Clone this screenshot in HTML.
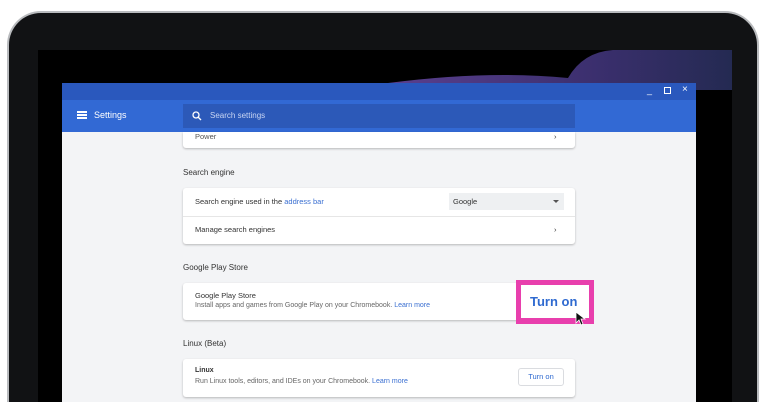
<!DOCTYPE html>
<html style="width:768px;height:402px;overflow:hidden"><head><style>
*{margin:0;padding:0;box-sizing:border-box}
body{width:768px;height:402px;overflow:hidden;background:#fff;font-family:"Liberation Sans",sans-serif;position:relative}
.bezel{position:absolute;left:7px;top:11px;width:752px;height:391px;border-radius:34px 34px 0 0;background:#111214;border:2px solid #b9bbbe;border-bottom:none}
.screen{position:absolute;left:38px;top:50px;width:694px;height:352px;background:#000;overflow:hidden}
.win{position:absolute;left:62px;top:83px;width:634px;height:319px;background:#f3f4f6;overflow:hidden}
.title{position:absolute;left:0;top:0;width:634px;height:17px;background:#2a58bd}
.head{position:absolute;left:0;top:17px;width:634px;height:32px;background:#3269d4}
.search{position:absolute;left:121px;top:21px;width:392px;height:24px;background:#2c59b8;color:#c9d6f3;font-size:8px;padding:7px 0 0 27px}
.card{position:absolute;left:121px;width:392px;background:#fff;border-radius:3px;box-shadow:0 1px 2px rgba(0,0,0,.25)}
.lbl{position:absolute;left:121px;font-size:8px;color:#333}
.t{position:absolute;font-size:7.5px;color:#333}
.s{position:absolute;font-size:7px;color:#666}
a{color:#3a6fd1;text-decoration:none}
</style></head><body>
<div class="bezel"></div>
<div class="screen">
<svg width="694" height="360" style="position:absolute;left:0;top:0">
<defs><linearGradient id="g" x1="0" x2="1"><stop offset="0" stop-color="#5a3f8e"/><stop offset="0.6" stop-color="#3b2f6e"/><stop offset="1" stop-color="#242a52"/></linearGradient></defs>
<path d="M350 33 Q450 20 530 28 Q545 2 575 0 L694 0 L694 40 L350 40Z" fill="url(#g)"/>
</svg>
</div>
<div class="win">
<div class="title"><span style="position:absolute;left:585px;top:2px;color:#fff;font-size:9px">_</span><span style="position:absolute;left:602px;top:4px;width:7px;height:7px;border:1.2px solid #fff"></span><span style="position:absolute;left:620px;top:1px;color:#fff;font-size:10px">×</span></div>
<div class="head">
<div style="position:absolute;left:15px;top:11px;width:10px;height:1.5px;background:#fff;box-shadow:0 3px 0 #fff,0 6px 0 #fff"></div>
<span style="position:absolute;left:32px;top:10px;color:#fff;font-size:9px">Settings</span>
</div>
<div class="search"><svg width="10" height="10" style="position:absolute;left:9px;top:7px"><circle cx="4" cy="4" r="3" stroke="#fff" stroke-width="1.3" fill="none"/><path d="M6 6 L9 9" stroke="#fff" stroke-width="1.3"/></svg>Search settings</div>
<div class="card" style="top:49px;height:16px;border-radius:0 0 3px 3px"><span class="t" style="left:12px;top:0px;color:#555">Power</span><span class="t" style="left:371px;top:0">›</span></div>
<div class="lbl" style="top:85px">Search engine</div>
<div class="card" style="top:105px;height:56px">
<span class="t" style="left:12px;top:9px">Search engine used in the <a>address bar</a></span>
<div style="position:absolute;left:266px;top:5px;width:115px;height:17px;background:#eef0f2"><span class="t" style="left:4px;top:4px">Google</span><span style="position:absolute;left:104px;top:7px;border:3px solid transparent;border-top-color:#555"></span></div>
<div style="position:absolute;left:0;top:28px;width:392px;height:1px;background:#e6e6e6"></div>
<span class="t" style="left:12px;top:37px">Manage search engines</span><span class="t" style="left:371px;top:37px">›</span>
</div>
<div class="lbl" style="top:180px">Google Play Store</div>
<div class="card" style="top:200px;height:37px">
<span class="t" style="left:12px;top:8px">Google Play Store</span>
<span class="s" style="left:12px;top:19px">Install apps and games from Google Play on your Chromebook. <a>Learn more</a></span>
</div>
<div style="position:absolute;left:454px;top:197px;width:78px;height:44px;background:#e83fad"><div style="position:absolute;left:5px;top:5px;width:68px;height:33px;background:#fff;color:#2f6ad0;font-size:13px;font-weight:bold;padding:9px 0 0 9px">Turn on</div></div>
<svg width="12" height="16" style="position:absolute;left:512px;top:228px"><path d="M2 1 L2 12 L5 9 L7 14 L9 13 L7 8 L11 8Z" fill="#111" stroke="#fff" stroke-width=".8"/></svg>
<div class="lbl" style="top:256px">Linux (Beta)</div>
<div class="card" style="top:276px;height:38px">
<span class="t" style="left:12px;top:8px;font-weight:bold;font-size:7px">Linux</span>
<span class="s" style="left:12px;top:19px">Run Linux tools, editors, and IDEs on your Chromebook. <a>Learn more</a></span>
<div style="position:absolute;left:335px;top:9px;width:46px;height:18px;border:1px solid #dadce0;border-radius:3px;color:#2f6ad0;font-size:7.5px;text-align:center;line-height:16px">Turn on</div>
</div>
</div>
</body></html>
